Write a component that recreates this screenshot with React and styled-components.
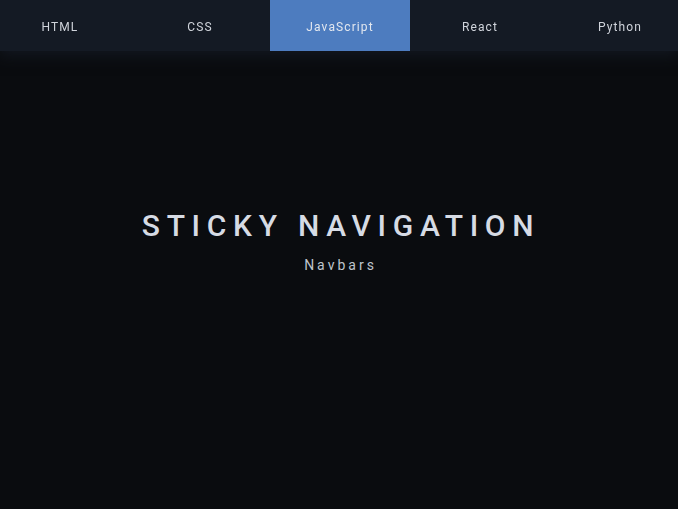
import React from 'react'
import styled, { createGlobalStyle } from 'styled-components'

const Global = createGlobalStyle`
  html, body {
    margin: 0;
    padding: 0;
    background: #0a0c0f;
    font-family: Roboto, "Liberation Sans", sans-serif;
  }
`

const Page = styled.div`
  min-height: 100vh;
  background: #0a0c0f;
  overflow: hidden;
`

const Nav = styled.nav`
  position: sticky;
  top: 0;
  display: flex;
  justify-content: center;
  height: 51px;
  padding-left: 2px;
  background: #141a24;
  box-shadow: 0 4px 14px rgba(20, 26, 36, 0.9);
`

const NavItem = styled.a`
  flex: 0 0 140px;
  display: flex;
  align-items: center;
  justify-content: center;
  padding-top: 2px;
  font-size: 12px;
  letter-spacing: 1.1px;
  color: ${({ active }) => (active ? '#e2e7ef' : '#d0d4db')};
  background: ${({ active }) => (active ? '#4d7cbf' : 'transparent')};
  text-decoration: none;
  cursor: pointer;
`

const Hero = styled.header`
  display: flex;
  flex-direction: column;
  align-items: center;
  padding-top: 155px;
`

const Title = styled.h1`
  margin: 0;
  padding-left: 4px;
  font-size: 30px;
  font-weight: 500;
  letter-spacing: 6.7px;
  color: #d6dbe4;
  line-height: 40px;
`

const Sub = styled.p`
  margin: 11px 0 0;
  padding-left: 3px;
  font-size: 14px;
  line-height: 16px;
  letter-spacing: 3px;
  color: #bfc4cc;
`

const links = ['HTML', 'CSS', 'JavaScript', 'React', 'Python']

const App = () => {
  return (
    <Page>
      <Global />
      <Nav>
        {links.map(l => (
          <NavItem key={l} active={l === 'JavaScript'}>{l}</NavItem>
        ))}
      </Nav>
      <Hero>
        <Title>STICKY NAVIGATION</Title>
        <Sub>Navbars</Sub>
      </Hero>
    </Page>
  )
}

export default App
